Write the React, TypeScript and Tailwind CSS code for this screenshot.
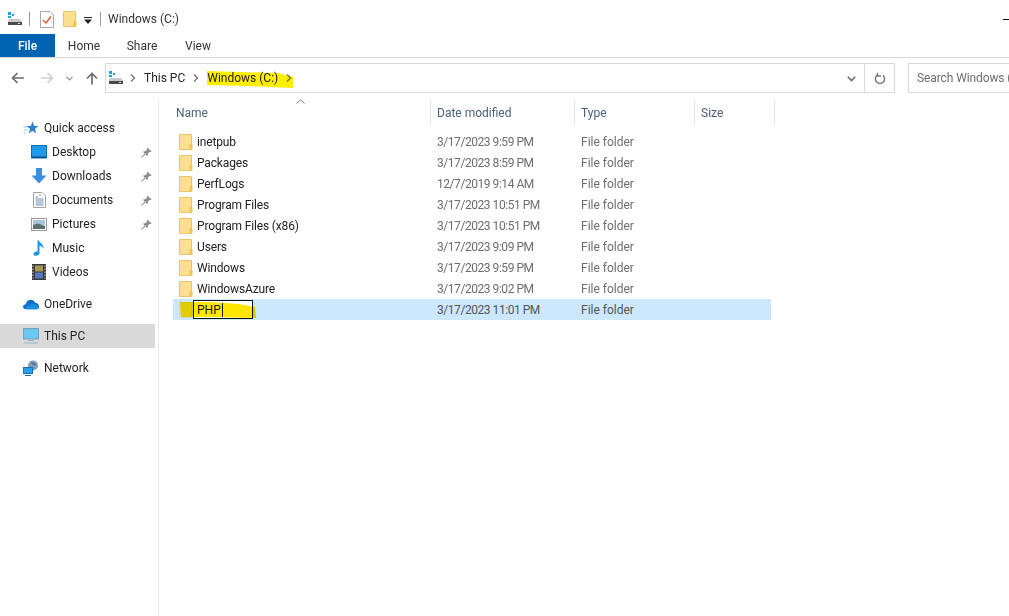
import type { ReactNode } from "react";

const folders = [
  { name: "inetpub", date: "3/17/2023 9:59 PM" },
  { name: "Packages", date: "3/17/2023 8:59 PM" },
  { name: "PerfLogs", date: "12/7/2019 9:14 AM" },
  { name: "Program Files", date: "3/17/2023 10:51 PM" },
  { name: "Program Files (x86)", date: "3/17/2023 10:51 PM" },
  { name: "Users", date: "3/17/2023 9:09 PM" },
  { name: "Windows", date: "3/17/2023 9:59 PM" },
  { name: "WindowsAzure", date: "3/17/2023 9:02 PM" },
];

function FolderIcon({ className = "" }: { className?: string }) {
  return (
    <svg width="14" height="16" viewBox="0 0 14 16" className={className}>
      <path d="M0.5 0.5H12.5V15.5H0.5Z" fill="#fde08f" stroke="#e8c56c" />
      <path d="M10.5 10V15.5H13.5V10Z" fill="#f3c452" />
    </svg>
  );
}

function DriveIcon() {
  return (
    <svg width="16" height="16" viewBox="0 0 16 16">
      <rect x="1" y="1" width="3" height="3" fill="#1aa3dc" />
      <rect x="5" y="3" width="2" height="2" fill="#1aa3dc" />
      <rect x="1" y="5" width="3" height="2" fill="#1aa3dc" />
      <path d="M2 8H13L15 11V14H1V11Z" fill="#c9c9c9" />
      <rect x="1" y="11" width="14" height="3" fill="#4a4a4a" />
      <rect x="11" y="12" width="2" height="1" fill="#e8e8e8" />
    </svg>
  );
}

function Chevron({ color = "#777" }: { color?: string }) {
  return (
    <svg width="6" height="8" viewBox="0 0 6 8">
      <path d="M1 0.5L4.5 4L1 7.5" fill="none" stroke={color} strokeWidth="1.4" />
    </svg>
  );
}

function Pin() {
  return (
    <svg width="11" height="11" viewBox="0 0 11 11" className="ml-auto mr-[3px]">
      <path d="M6.5 0.5L10.5 4.5L9.5 5L8.5 4.8L6.8 6.8L6.8 8.5L6 9L2.2 5L2.8 4.2L4.4 4.2L6.2 2.4L6 1.2Z" fill="#8b8b8b" />
      <path d="M3.5 7L0.5 10.5L4 7.5Z" fill="#8b8b8b" stroke="#8b8b8b" strokeWidth="0.6" />
    </svg>
  );
}

const QuickIcon = (
  <svg width="16" height="16" viewBox="0 0 16 16">
    <path d="M9.5 1.5L11.2 6H15.5L12 8.8L13.2 13.5L9.5 10.8L5.8 13.5L7 8.8L3.5 6H7.8Z" fill="#2f7fd4" />
    <path d="M0.5 7H4M1 10H4.5M0.5 13H3" stroke="#8ccbf2" strokeWidth="1" />
  </svg>
);

const DesktopIcon = (
  <svg width="16" height="14" viewBox="0 0 16 14">
    <rect x="0.5" y="0.5" width="15" height="12.5" fill="#1e9be8" stroke="#0f6fb5" />
    <rect x="1" y="11.5" width="14" height="1.5" fill="#0b4f86" />
  </svg>
);

const DownloadsIcon = (
  <svg width="16" height="16" viewBox="0 0 16 16">
    <path d="M5 0H11V7.5H15.5L8 15.5L0.5 7.5H5Z" fill="#3d8edb" />
  </svg>
);

const DocumentsIcon = (
  <svg width="13" height="16" viewBox="0 0 13 16">
    <path d="M0.5 0.5H9L12.5 4V15.5H0.5Z" fill="#fff" stroke="#a3a3a3" />
    <path d="M2.5 5H5M2.5 7H10.5M2.5 9H10.5M2.5 11H10.5M2.5 13H10.5M6 3H8" stroke="#6c8fb0" strokeWidth="1" />
  </svg>
);

const PicturesIcon = (
  <svg width="16" height="13" viewBox="0 0 16 13">
    <rect x="0.5" y="0.5" width="15" height="12" fill="#fff" stroke="#9a9a9a" />
    <rect x="2" y="2" width="12" height="5" fill="#a8c6dc" />
    <path d="M2 7L7 5.5L14 8V11H2Z" fill="#5b6f70" />
  </svg>
);

const MusicIcon = (
  <svg width="12" height="16" viewBox="0 0 12 16">
    <path d="M4.5 0.5H6C6.5 3 11 4 10.5 9C9.5 6.5 8 6 6.5 5.8V13C6.5 15 4.5 15.8 2.8 15.8C1.2 15.8 0.5 14.8 0.5 13.8C0.5 12.4 2.5 11.2 4.5 11.6Z" fill="#1e97e8" />
  </svg>
);

const VideosIcon = (
  <svg width="14" height="16" viewBox="0 0 14 16">
    <rect x="0" y="0" width="14" height="16" fill="#3a3a3a" />
    <rect x="3" y="1.5" width="8" height="6" fill="#a59a52" />
    <rect x="3" y="8.5" width="8" height="6" fill="#5a76c0" />
    <path d="M1 1.5V14.5M13 1.5V14.5" stroke="#d5d5d5" strokeWidth="1" strokeDasharray="1.5 1.5" />
  </svg>
);

const OneDriveIcon = (
  <svg width="17" height="11" viewBox="0 0 17 11">
    <path d="M3.5 10.5C1.5 10.5 0 9.4 0 7.8C0 6.2 1.5 5.2 3 5.2C3.6 2.4 5.8 0.5 8.3 0.5C10.5 0.5 12 1.8 12.8 3.6C15 3.6 17 5.4 17 7.5C17 9.2 15.8 10.5 14 10.5Z" fill="#0f6fc6" />
    <path d="M5 10.5C3.6 10.5 3 9.4 3.5 8.4C4 7.2 5.6 6.8 6.8 7C7.6 5.4 9.4 4.2 11.4 4.6C13 4.9 14 6 14.2 7.2C15.8 7.2 17 8 17 9C17 10 16 10.5 15 10.5Z" fill="#1a8fe0" />
  </svg>
);

const ThisPcIcon = (
  <svg width="16" height="16" viewBox="0 0 16 16">
    <rect x="0.5" y="0.5" width="15" height="10.5" fill="#69c7f0" stroke="#7f9fb3" />
    <path d="M5 12.5H11M1 15H15" stroke="#9db3c2" strokeWidth="1.2" />
  </svg>
);

const NetworkIcon = (
  <svg width="16" height="16" viewBox="0 0 16 16">
    <circle cx="10" cy="5.5" r="5" fill="#7f9fbd" />
    <path d="M8 1.5C10 3 12 3 13 5C11 6 9 5 8 1.5Z" fill="#4b6f91" />
    <rect x="0.5" y="7.5" width="9" height="6" fill="#2a9fe6" stroke="#1a6fae" />
    <path d="M2 15.5H8" stroke="#1a6fae" strokeWidth="1" />
  </svg>
);

function NavRow({ icon, label, pinned, indent, active, className = "" }: { icon: ReactNode; label: string; pinned?: boolean; indent?: boolean; active?: boolean; className?: string }) {
  return (
    <div className={`flex h-6 w-[155px] items-center ${indent ? "pl-[31px]" : "pl-[23px]"} ${active ? "bg-[#d9d9d9]" : ""} ${className}`}>
      <span className="flex w-[16px] shrink-0 items-center justify-center">{icon}</span>
      <span className="ml-[5px] text-[12px] text-[#1f1f1f]">{label}</span>
      {pinned ? <Pin /> : null}
    </div>
  );
}

function HeaderCell({ label, width }: { label: string; width: string }) {
  return (
    <div className={`flex h-[25px] items-center border-r border-[#e5e5e5] text-[12px] text-[#4c607a] ${width}`}>
      {label}
    </div>
  );
}

export default function App() {
  return (
    <div className="flex h-[616px] w-[1009px] flex-col overflow-hidden bg-white text-[#1f1f1f] [font-family:Roboto,sans-serif]">
      {/* title bar */}
      <div className="flex h-[34px] shrink-0 items-center pl-[7px] pt-[4px]">
        <DriveIcon />
        <span className="ml-[6px] h-[14px] w-px bg-[#9a9a9a]" />
        <svg width="14" height="17" viewBox="0 0 14 17" className="ml-[10px]">
          <path d="M0.5 0.5H10L13.5 4V16.5H0.5Z" fill="#fff" stroke="#a8a8a8" />
          <path d="M3 9L6 12L11 5.5" fill="none" stroke="#d9572b" strokeWidth="1.4" />
        </svg>
        <FolderIcon className="ml-[9px]" />
        <svg width="8" height="7" viewBox="0 0 8 7" className="ml-[7px] mt-[2px]">
          <path d="M0 0H8V1H0ZM0 2.5H8L4 7Z" fill="#222" />
        </svg>
        <span className="ml-[8px] h-[14px] w-px bg-[#9a9a9a]" />
        <span className="ml-[7px] text-[12px] text-[#333]">Windows (C:)</span>
        <span className="ml-auto mr-0 h-px w-[6px] bg-[#111]" />
      </div>

      {/* ribbon tabs */}
      <div className="flex h-[24px] shrink-0 items-stretch border-b border-[#dadada]">
        <div className="flex w-[55px] items-center justify-center bg-[#0063b1] text-[12px] font-medium text-white">File</div>
        <div className="flex w-[58px] items-center justify-center text-[12px] text-[#333]">Home</div>
        <div className="flex w-[58px] items-center justify-center text-[12px] text-[#333]">Share</div>
        <div className="flex w-[54px] items-center justify-center text-[12px] text-[#333]">View</div>
      </div>

      {/* address row */}
      <div className="flex h-[35px] shrink-0 items-end">
        <div className="flex h-[30px] w-[105px] items-center">
          <svg width="14" height="12" viewBox="0 0 14 12" className="ml-[11px]">
            <path d="M13 6H2M6.5 1.2L1.5 6L6.5 10.8" fill="none" stroke="#6d6d6d" strokeWidth="1.6" />
          </svg>
          <svg width="14" height="12" viewBox="0 0 14 12" className="ml-[15px]">
            <path d="M1 6H12M7.5 1.2L12.5 6L7.5 10.8" fill="none" stroke="#d0d0d0" strokeWidth="1.6" />
          </svg>
          <svg width="7" height="5" viewBox="0 0 7 5" className="ml-[12px]">
            <path d="M0.5 0.8L3.5 3.8L6.5 0.8" fill="none" stroke="#8a8a8a" strokeWidth="1.2" />
          </svg>
          <svg width="12" height="13" viewBox="0 0 12 13" className="ml-[13px]">
            <path d="M6 12.5V2M1 6.5L6 1.5L11 6.5" fill="none" stroke="#6d6d6d" strokeWidth="1.7" />
          </svg>
        </div>
        <div className="relative flex h-[30px] w-[790px] items-center border border-[#d9d9d9] pl-[2px]">
          <DriveIcon />
          <span className="ml-[6px]"><Chevron /></span>
          <span className="ml-[8px] text-[12px] text-[#222]">This PC</span>
          <span className="ml-[8px]"><Chevron /></span>
          <span className="ml-[8px] text-[12px] text-[#222]">Windows (C:)</span>
          <span className="ml-[8px]"><Chevron /></span>
          <svg width="90" height="20" viewBox="0 0 90 20" className="absolute left-[100px] top-[6px] mix-blend-multiply">
            <path d="M1 1L72 3L87 7L87 18L40 16L1 15Z" fill="#ffee00" />
          </svg>
          <svg width="9" height="6" viewBox="0 0 9 6" className="absolute right-[38px] top-[12px]">
            <path d="M0.8 0.8L4.5 4.5L8.2 0.8" fill="none" stroke="#6d6d6d" strokeWidth="1.6" />
          </svg>
          <div className="absolute right-0 top-0 flex h-full w-[30px] items-center justify-center border-l border-[#d9d9d9]">
            <svg width="12" height="13" viewBox="0 0 12 13">
              <path d="M3 3.4A4.6 4.6 0 1 0 9 3.4M3.5 0.8V4H7" fill="none" stroke="#7a7a7a" strokeWidth="1.5" />
            </svg>
          </div>
        </div>
        <div className="ml-[13px] flex h-[30px] flex-1 items-center overflow-hidden whitespace-nowrap border border-r-0 border-[#d9d9d9] pl-[8px] text-[12px] tracking-[-0.1px] text-[#6d6d6d]">
          Search Windows (C:)
        </div>
      </div>

      {/* body */}
      <div className="flex min-h-0 flex-1 pt-[7px]">
        <nav className="w-[159px] shrink-0 border-r border-[#e8e8e8] pt-[16px]">
          <NavRow icon={QuickIcon} label="Quick access" />
          <NavRow icon={DesktopIcon} label="Desktop" pinned indent />
          <NavRow icon={DownloadsIcon} label="Downloads" pinned indent />
          <NavRow icon={DocumentsIcon} label="Documents" pinned indent />
          <NavRow icon={PicturesIcon} label="Pictures" pinned indent />
          <NavRow icon={MusicIcon} label="Music" indent />
          <NavRow icon={VideosIcon} label="Videos" indent />
          <NavRow icon={OneDriveIcon} label="OneDrive" className="mt-[8px]" />
          <NavRow icon={ThisPcIcon} label="This PC" active className="mt-[8px]" />
          <NavRow icon={NetworkIcon} label="Network" className="mt-[8px]" />
        </nav>

        <main className="relative min-w-0 flex-1 pl-[14px]">
          <svg width="9" height="5" viewBox="0 0 9 5" className="absolute left-[137px] top-[-1px]">
            <path d="M0.5 4.5L4.5 0.8L8.5 4.5" fill="none" stroke="#7a7a7a" strokeWidth="1" />
          </svg>
          <div className="flex">
            <HeaderCell label="Name" width="w-[258px] pl-[3px]" />
            <HeaderCell label="Date modified" width="w-[144px] pl-[6px]" />
            <HeaderCell label="Type" width="w-[120px] pl-[6px]" />
            <HeaderCell label="Size" width="w-[80px] pl-[6px]" />
          </div>
          <div className="pt-[6px]">
            {folders.map((f) => (
              <div key={f.name} className="flex h-[21px] items-center text-[12px]">
                <div className="flex w-[258px] items-center pl-[6px]">
                  <FolderIcon />
                  <span className="ml-[4px] tracking-[-0.15px] text-[#222]">{f.name}</span>
                </div>
                <div className="w-[144px] pl-[6px] tracking-[-0.45px] text-[#6d6d6d]">{f.date}</div>
                <div className="w-[120px] pl-[6px] text-[#6d6d6d]">File folder</div>
              </div>
            ))}
            <div className="relative flex h-[21px] w-[598px] items-center bg-[#cce8ff] text-[12px]">
              <div className="flex w-[258px] items-center pl-[6px]">
                <FolderIcon className="opacity-40" />
                <div className="flex h-[19px] w-[60px] items-center border border-[#111] bg-white pl-[3px] text-[#222]">
                  PHP<span className="ml-px h-[14px] w-px bg-[#111]" />
                </div>
              </div>
              <div className="w-[144px] pl-[6px] tracking-[-0.45px] text-[#555]">3/17/2023 11:01 PM</div>
              <div className="w-[120px] pl-[6px] text-[#555]">File folder</div>
              <svg width="78" height="18" viewBox="0 0 78 18" className="absolute left-[6px] top-[2px] mix-blend-multiply">
                <path d="M1 1L32 1L60 3L76 6L77 17L30 16L2 16Z" fill="#ffe600" />
              </svg>
            </div>
          </div>
        </main>
      </div>
    </div>
  );
}
